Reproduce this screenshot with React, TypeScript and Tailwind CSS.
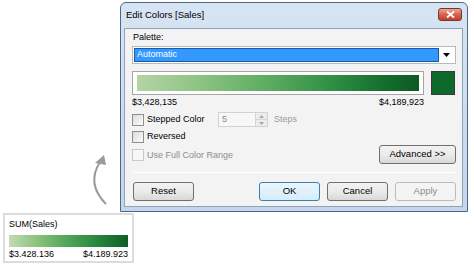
import React from 'react';

const font = { fontFamily: '"Liberation Sans", Arial, sans-serif' };

const Checkbox = ({ disabled }: { disabled?: boolean }) => (
  <span
    className={`inline-block w-[12px] h-[12px] border ${
      disabled ? 'border-[#c9c9c9] bg-[#f7f7f7]' : 'border-[#8e8f8f] bg-gradient-to-br from-[#dcdcdc] to-[#fbfbfb]'
    }`}
  />
);

const Button = ({ label, focused, disabled, className = '' }: any) => (
  <div
    className={`h-[19px] flex items-center justify-center rounded-[3px] border text-[9.5px] ${
      disabled
        ? 'border-[#b9bcbf] bg-[#f4f4f4] text-[#8d8d8d]'
        : focused
        ? 'border-[#3c7fb1] bg-gradient-to-b from-[#eaf6fd] to-[#d6ecfa] text-black'
        : 'border-[#707070] bg-gradient-to-b from-[#f2f2f2] via-[#ebebeb] to-[#d8d8d8] text-black'
    } ${className}`}
  >
    {label}
  </div>
);

const Dialog = () => (
  <div className="w-[348px] h-[210px] flex flex-col border border-[#4d6784] rounded-t-[6px] bg-gradient-to-b from-[#d7e4f3] to-[#c4d6ec]">
    {/* title bar */}
    <div className="h-[25px] flex items-center justify-between pl-[5px] pr-[5px]">
      <span className="text-[9.5px] text-black">Edit Colors [Sales]</span>
      <div className="w-[24px] h-[13px] rounded-[3px] border border-[#7d3325] bg-gradient-to-b from-[#e9a796] via-[#d36450] to-[#c0402b] flex items-center justify-center -mt-[3px]">
        <svg width="9" height="7" viewBox="0 0 9 7">
          <path d="M1 0.5 L8 6.5 M8 0.5 L1 6.5" stroke="white" strokeWidth="1.8" />
        </svg>
      </div>
    </div>

    {/* body */}
    <div className="flex-1 ml-[3px] mr-[4px] mb-[4px] border border-[#8ea3ba] bg-[#f3f3f3] pl-[7px] pr-[6px] flex flex-col text-[9px] text-black">
      <div className="pt-[2px] pl-px h-[14px] leading-[12px]">Palette:</div>

      {/* dropdown */}
      <div className="mt-[3px] h-[18px] flex items-center border border-[#b5b9c0] bg-white p-px">
        <div className="flex-1 h-full bg-[#3399ff] border border-[#1e5aa0] flex items-center pl-[2px] text-white">
          Automatic
        </div>
        <div className="w-[15px] flex justify-center">
          <svg width="7" height="4" viewBox="0 0 7 4">
            <path d="M0 0 H7 L3.5 4 Z" fill="#000" />
          </svg>
        </div>
      </div>

      {/* gradient */}
      <div className="mt-[7px] flex items-center">
        <div className="w-[292px] h-[24px] border border-[#a5a5a5] bg-white p-[3px] pl-[4px] pr-[4px]">
          <div className="w-full h-full bg-[linear-gradient(90deg,#b4d4a6_0%,#92c585_20%,#5fae62_45%,#2e8e43_70%,#146d2d_88%,#0c5a23_100%)]" />
        </div>
        <div className="ml-auto mr-px w-[24px] h-[24px] border border-[#3a3a3a] bg-[#0e6a2b]" />
      </div>
      <div className="w-[292px] flex justify-between h-[12px] leading-[12px] mt-px">
        <span>$3,428,135</span>
        <span>$4,189,923</span>
      </div>

      {/* stepped color */}
      <div className="mt-[4px] h-[15px] flex items-center">
        <Checkbox />
        <span className="ml-[3px] w-[71px]">Stepped Color</span>
        <div className="w-[50px] h-[15px] border border-[#cfd2d6] bg-[#f7f7f7] flex">
          <span className="flex-1 pl-[3px] text-[#8a8a8a] leading-[13px]">5</span>
          <div className="w-[12px] flex flex-col border-l border-[#d5d5d5]">
            <div className="flex-1 flex items-center justify-center border-b border-[#d5d5d5] bg-[#ececec]">
              <svg width="5" height="3" viewBox="0 0 5 3"><path d="M0 3 H5 L2.5 0 Z" fill="#a8a8a8" /></svg>
            </div>
            <div className="flex-1 flex items-center justify-center bg-[#ececec]">
              <svg width="5" height="3" viewBox="0 0 5 3"><path d="M0 0 H5 L2.5 3 Z" fill="#a8a8a8" /></svg>
            </div>
          </div>
        </div>
        <span className="ml-[6px] text-[#9a9a9a]">Steps</span>
      </div>

      {/* reversed */}
      <div className="mt-[3px] h-[14px] flex items-center">
        <Checkbox />
        <span className="ml-[3px]">Reversed</span>
      </div>

      {/* full color range + advanced */}
      <div className="mt-px h-[19px] flex items-center">
        <Checkbox disabled />
        <span className="ml-[3px] text-[#8d8d8d] mt-[3px]">Use Full Color Range</span>
        <Button label="Advanced >>" className="ml-auto w-[77px]" />
      </div>

      <div className="mt-[8px] h-px bg-[#a0a0a0] border-b border-white" />

      {/* buttons */}
      <div className="mt-[9px] flex items-center">
        <Button label="Reset" className="w-[61px] ml-px" />
        <Button label="OK" focused className="w-[61px] ml-auto" />
        <Button label="Cancel" className="w-[61px] ml-[7px]" />
        <Button label="Apply" disabled className="w-[61px] ml-[7px]" />
      </div>
    </div>
  </div>
);

const Legend = () => (
  <div className="w-[131px] h-[50px] border-2 border-[#dcdcdc] bg-white px-[4px] pt-[3px] flex flex-col text-[9px] text-black">
    <span className="leading-[12px]">SUM(Sales)</span>
    <div className="mt-[5px] h-[12px] bg-[linear-gradient(90deg,#c2dbb5_0%,#8fc47f_22%,#52a658_48%,#2a8a3f_72%,#0d5e25_100%)]" />
    <div className="flex justify-between leading-[12px] mt-px">
      <span>$3.428.136</span>
      <span>$4.189.923</span>
    </div>
  </div>
);

export default function App() {
  return (
    <div className="w-[474px] h-[271px] bg-white relative overflow-hidden flex flex-col" style={font}>
      <div className="ml-[120px] mt-[2px]">
        <Dialog />
      </div>
      <div className="ml-[3px] mt-px">
        <Legend />
      </div>
      <svg className="absolute left-0 top-0" width="474" height="271" viewBox="0 0 474 271">
        <path d="M106 204 Q86 184 100 162" fill="none" stroke="#9a9a9a" strokeWidth="2" />
        <polygon points="104,155 95,163 106,165" fill="#9a9a9a" />
      </svg>
    </div>
  );
}
